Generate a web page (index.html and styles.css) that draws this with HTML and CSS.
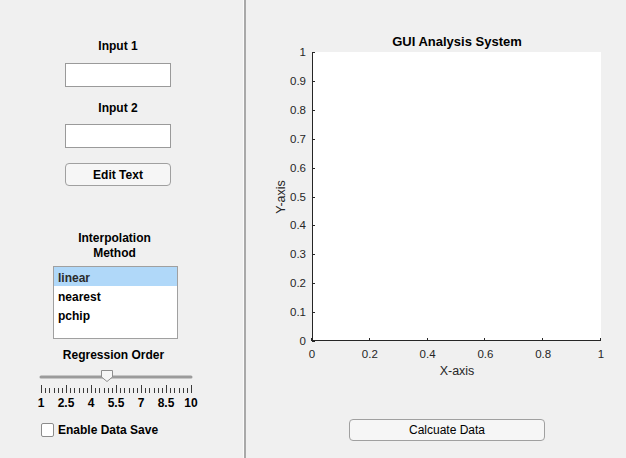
FILE: index.html
```html
<!DOCTYPE html>
<html lang="en">
<head>
    <meta charset="UTF-8">
    <title>GUI Analysis System</title>
    <link rel="stylesheet" href="styles.css">
</head>
<body>
    <div class="app">
        <div class="left-panel">
            <div class="field-label">Input 1</div>
            <input class="text-input input-1" type="text">
            <div class="field-label label-2">Input 2</div>
            <input class="text-input input-2" type="text">
            <button class="edit-button">Edit Text</button>

            <div class="list-label">Interpolation<br>Method</div>
            <div class="listbox">
                <div class="list-item selected">linear</div>
                <div class="list-item">nearest</div>
                <div class="list-item">pchip</div>
            </div>

            <div class="slider-label">Regression Order</div>
            <svg class="slider" width="165" height="44" viewBox="34 366 165 44">
                <line x1="41" y1="377" x2="191" y2="377" stroke="#9b9b9b" stroke-width="3" stroke-linecap="round"/>
                <g id="slider-ticks" stroke="#3a3a3a" stroke-width="1"></g>
                <path d="M101.5 370.5 H112.5 V377 L107 381.5 L101.5 377 Z" fill="#f7f7f7" stroke="#8f8f8f"/>
                <g class="slider-nums" text-anchor="middle">
                    <text x="41" y="407">1</text>
                    <text x="66" y="407">2.5</text>
                    <text x="91" y="407">4</text>
                    <text x="116" y="407">5.5</text>
                    <text x="141" y="407">7</text>
                    <text x="166" y="407">8.5</text>
                    <text x="191" y="407">10</text>
                </g>
            </svg>

            <label class="check-row">
                <span class="check-box"></span>
                <span>Enable Data Save</span>
            </label>
        </div>

        <div class="divider"></div>

        <div class="right-panel">
            <svg class="plot" width="380" height="355" viewBox="246 30 380 355">
                <text class="plot-title" x="457" y="46" text-anchor="middle">GUI Analysis System</text>
                <rect x="312" y="52" width="289" height="289" fill="#fff"/>
                <g id="y-ticks" class="tick-text" text-anchor="end"></g>
                <g id="x-ticks" class="tick-text" text-anchor="middle"></g>
                <line x1="312.5" y1="52" x2="312.5" y2="341" stroke="#262626"/>
                <line x1="312" y1="340.5" x2="601" y2="340.5" stroke="#262626"/>
                <text class="axis-label" x="457" y="375" text-anchor="middle">X-axis</text>
                <text class="axis-label" x="285" y="197" text-anchor="middle" transform="rotate(-90 285 197)">Y-axis</text>
            </svg>
            <button class="calc-button">Calcuate Data</button>
        </div>
    </div>

    <script>
        const NS = 'http://www.w3.org/2000/svg';

        function addLine(group, x1, y1, x2, y2) {
            const line = document.createElementNS(NS, 'line');
            line.setAttribute('x1', x1);
            line.setAttribute('y1', y1);
            line.setAttribute('x2', x2);
            line.setAttribute('y2', y2);
            group.appendChild(line);
        }

        function addText(group, x, y, text) {
            const t = document.createElementNS(NS, 'text');
            t.setAttribute('x', x);
            t.setAttribute('y', y);
            t.textContent = text;
            group.appendChild(t);
        }

        // slider ticks: major every 1.5, minor every 0.25
        const sliderTicks = document.getElementById('slider-ticks');
        for (let i = 0; i <= 36; i++) {
            const x = Math.round(41 + i * 150 / 36) + 0.5;
            const top = i % 6 === 0 ? 385 : 388;
            addLine(sliderTicks, x, top, x, 393);
        }

        // axes ticks
        const yTicks = document.getElementById('y-ticks');
        const xTicks = document.getElementById('x-ticks');
        const labels = ['0', '0.1', '0.2', '0.3', '0.4', '0.5', '0.6', '0.7', '0.8', '0.9', '1'];
        for (let i = 0; i <= 10; i++) {
            const y = 341 - i * 28.9;
            addText(yTicks, 306, y + 4, labels[i]);
            const ty = Math.round(y) + 0.5;
            addLine(yTicks, 312, ty, 315, ty);
        }
        const xLabels = ['0', '0.2', '0.4', '0.6', '0.8', '1'];
        for (let i = 0; i <= 5; i++) {
            const x = 312 + i * 57.8;
            addText(xTicks, x, 358, xLabels[i]);
            const tx = Math.round(x) - 0.5;
            addLine(xTicks, tx, 341, tx, 338);
        }
    </script>
</body>
</html>
```

FILE: styles.css
```css
* {
    box-sizing: border-box;
    margin: 0;
    padding: 0;
}

body {
    font-family: "Liberation Sans", Arial, sans-serif;
    background-color: #f0f0f0;
    color: #000;
    width: 626px;
    height: 458px;
    overflow: hidden;
}

.app {
    display: flex;
    height: 458px;
}

.left-panel {
    width: 243px;
    padding-top: 39px;
    display: flex;
    flex-direction: column;
}

.divider {
    width: 3px;
    border-left: 1px solid #fafafa;
    background: #a9a9a9;
}

.right-panel {
    flex: 1;
    padding-top: 30px;
    display: flex;
    flex-direction: column;
}

.field-label {
    width: 106px;
    margin-left: 65px;
    font-size: 12px;
    font-weight: bold;
    line-height: 15px;
    text-align: center;
}

.label-2 {
    margin-top: 14px;
}

.text-input {
    width: 106px;
    height: 24px;
    margin-left: 65px;
    border: 1px solid #9a9a9a;
    background: #fff;
    outline: none;
}

.input-1 {
    margin-top: 9px;
}

.input-2 {
    margin-top: 8px;
}

.edit-button {
    width: 106px;
    height: 23px;
    margin-top: 15px;
    margin-left: 65px;
    border: 1px solid #a0a0a0;
    border-radius: 4px;
    background: #f6f6f6;
    font-family: inherit;
    font-size: 12px;
    font-weight: bold;
    color: #000;
}

.list-label {
    width: 125px;
    margin-top: 45px;
    margin-left: 52px;
    font-size: 12px;
    font-weight: bold;
    line-height: 15px;
    text-align: center;
}

.listbox {
    width: 125px;
    height: 73px;
    margin-top: 5px;
    margin-left: 53px;
    border: 1px solid #a0a0a0;
    background: #fff;
}

.list-item {
    height: 19px;
    line-height: 23px;
    padding-left: 4px;
    font-size: 12px;
    font-weight: bold;
}

.list-item.selected {
    background: #b0d8f9;
    color: #2b2b2b;
}

.slider-label {
    width: 125px;
    margin-top: 9px;
    margin-left: 51px;
    font-size: 12px;
    font-weight: bold;
    line-height: 15px;
    text-align: center;
}

.slider {
    display: block;
    margin-top: 3px;
    margin-left: 34px;
}

.slider-nums {
    font-size: 12px;
    font-weight: bold;
    fill: #000;
}

.check-row {
    display: flex;
    align-items: center;
    gap: 4px;
    margin-top: 13px;
    margin-left: 41px;
    font-size: 12px;
    font-weight: bold;
    height: 14px;
}

.check-box {
    width: 13px;
    height: 14px;
    border: 1px solid #8c8c8c;
    border-radius: 2px;
    background: #fff;
}

.plot {
    display: block;
}

.plot-title {
    font-size: 13px;
    font-weight: bold;
    fill: #000;
}

.tick-text {
    font-size: 11.5px;
    fill: #262626;
    stroke: #262626;
}

.tick-text text {
    stroke: none;
}

.axis-label {
    font-size: 12.5px;
    fill: #262626;
}

.calc-button {
    width: 196px;
    height: 22px;
    margin-top: 34px;
    margin-left: 103px;
    border: 1px solid #a0a0a0;
    border-radius: 4px;
    background: #f6f6f6;
    font-family: inherit;
    font-size: 12px;
    color: #000;
}
```
